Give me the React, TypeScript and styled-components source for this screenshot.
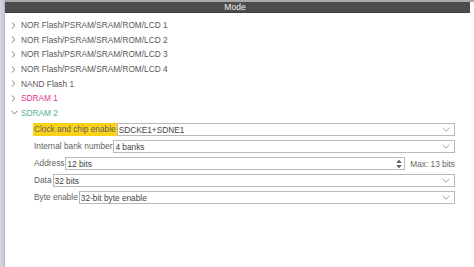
import styled, { createGlobalStyle } from "styled-components";

const GlobalStyle = createGlobalStyle`
  html, body {
    margin: 0;
    padding: 0;
    background: #ffffff;
  }
  body {
    font-family: "Liberation Sans", Arial, sans-serif;
  }
`;

type Tone = "plain" | "pink" | "green";

const toneColor: Record<Tone, string> = {
  plain: "#595959",
  pink: "#e4348c",
  green: "#4fb487",
};

const treeItems: { label: string; tone: Tone; open?: boolean }[] = [
  { label: "NOR Flash/PSRAM/SRAM/ROM/LCD 1", tone: "plain" },
  { label: "NOR Flash/PSRAM/SRAM/ROM/LCD 2", tone: "plain" },
  { label: "NOR Flash/PSRAM/SRAM/ROM/LCD 3", tone: "plain" },
  { label: "NOR Flash/PSRAM/SRAM/ROM/LCD 4", tone: "plain" },
  { label: "NAND Flash 1", tone: "plain" },
  { label: "SDRAM 1", tone: "pink" },
  { label: "SDRAM 2", tone: "green", open: true },
];

const Chevron = ({ open }: { open?: boolean }) => (
  <ChevronBox>
    {open ? (
      <svg width="7" height="5" viewBox="0 0 7 5">
        <polyline points="0.5,0.8 3.5,4 6.5,0.8" fill="none" stroke="#808080" strokeWidth="1" />
      </svg>
    ) : (
      <svg width="5" height="7" viewBox="0 0 5 7">
        <polyline points="0.8,0.5 4,3.5 0.8,6.5" fill="none" stroke="#808080" strokeWidth="1" />
      </svg>
    )}
  </ChevronBox>
);

const SelectArrow = () => (
  <svg width="8" height="5" viewBox="0 0 8 5">
    <polyline points="0.5,0.8 4,4.2 7.5,0.8" fill="none" stroke="#a0a0a0" strokeWidth="1" />
  </svg>
);

const Spinner = () => (
  <svg width="6" height="10" viewBox="0 0 6 10">
    <polygon points="3,0.5 5.8,4 0.2,4" fill="#666" />
    <polygon points="3,9.5 5.8,6 0.2,6" fill="#666" />
  </svg>
);

export default function App() {
  return (
    <>
      <GlobalStyle />
      <Page>
        <SideStrip />
        <Main>
          <TopStrip />
          <Header>Mode</Header>
          <Tree>
            {treeItems.map((item) => (
              <TreeRow key={item.label}>
                <Chevron open={item.open} />
                <TreeLabel $tone={item.tone}>{item.label}</TreeLabel>
              </TreeRow>
            ))}
          </Tree>
          <Form>
            <FieldRow>
              <FieldLabel $highlight>Clock and chip enable</FieldLabel>
              <SelectBox>
                <span>SDCKE1+SDNE1</span>
                <SelectArrow />
              </SelectBox>
            </FieldRow>
            <FieldRow>
              <FieldLabel>Internal bank number</FieldLabel>
              <SelectBox>
                <span>4 banks</span>
                <SelectArrow />
              </SelectBox>
            </FieldRow>
            <FieldRow>
              <FieldLabel>Address</FieldLabel>
              <NumberBox>
                <span>12 bits</span>
                <Spinner />
              </NumberBox>
              <Hint>Max: 13 bits</Hint>
            </FieldRow>
            <FieldRow>
              <FieldLabel>Data</FieldLabel>
              <SelectBox>
                <span>32 bits</span>
                <SelectArrow />
              </SelectBox>
            </FieldRow>
            <FieldRow>
              <FieldLabel>Byte enable</FieldLabel>
              <SelectBox>
                <span>32-bit byte enable</span>
                <SelectArrow />
              </SelectBox>
            </FieldRow>
          </Form>
        </Main>
      </Page>
    </>
  );
}

const Page = styled.div`
  display: flex;
  width: 474px;
  height: 267px;
  overflow: hidden;
  background: #ffffff;
`;

const SideStrip = styled.div`
  width: 5px;
  flex-shrink: 0;
  background: linear-gradient(to right, #d2d7dd, #c3c9d0);
  border-right: 1px solid #b4bcc5;
  box-sizing: border-box;
`;

const Main = styled.div`
  flex: 1;
  display: flex;
  flex-direction: column;
`;

const TopStrip = styled.div`
  height: 2px;
  background: #a9a9a9;
`;

const Header = styled.div`
  height: 10px;
  line-height: 10px;
  background: #4b4c4b;
  border-bottom: 1px solid #3e3e3e;
  color: #f2f2f2;
  font-size: 8.5px;
  text-align: center;
  padding-right: 5px;
  margin-right: 4px;
`;

const Tree = styled.div`
  display: flex;
  flex-direction: column;
  padding-top: 5px;
`;

const TreeRow = styled.div`
  display: flex;
  align-items: center;
  height: 14.6px;
  padding-left: 6px;
`;

const ChevronBox = styled.span`
  width: 10px;
  display: flex;
  justify-content: flex-start;
  align-items: center;
`;

const TreeLabel = styled.span<{ $tone: Tone }>`
  color: ${(p) => toneColor[p.$tone]};
  font-size: 8.3px;
  white-space: nowrap;
`;

const Form = styled.div`
  display: flex;
  flex-direction: column;
  gap: 4px;
  padding: 3px 19px 0 28px;
`;

const FieldRow = styled.div`
  display: flex;
  align-items: center;
  height: 13px;
`;

const FieldLabel = styled.span<{ $highlight?: boolean }>`
  color: #626262;
  font-size: 8.3px;
  white-space: nowrap;
  line-height: 13px;
  padding: 0 1px;
  background: ${(p) => (p.$highlight ? "#fad21a" : "transparent")};
`;

const SelectBox = styled.div`
  flex: 1;
  display: flex;
  align-items: center;
  justify-content: space-between;
  height: 13px;
  box-sizing: border-box;
  border: 1px solid #b9b9b9;
  padding: 0 4px 0 1px;
  color: #444444;
  font-size: 8.3px;
  white-space: nowrap;
`;

const NumberBox = styled(SelectBox)`
  padding-right: 2px;
`;

const Hint = styled.span`
  color: #666666;
  font-size: 8.3px;
  margin-left: 5px;
  white-space: nowrap;
`;
